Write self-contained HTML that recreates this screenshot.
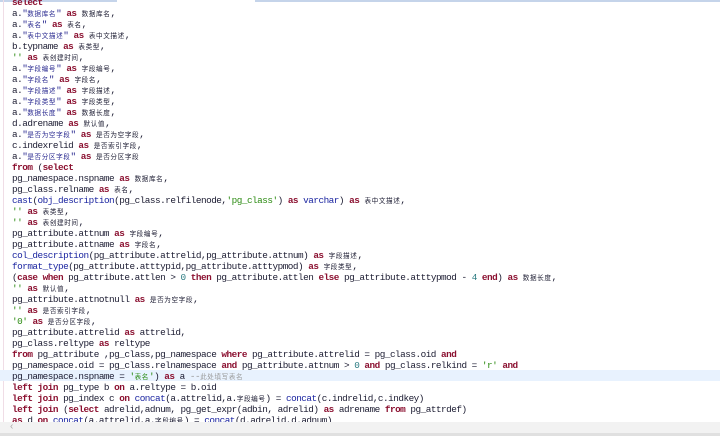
<!DOCTYPE html>
<html><head><meta charset="utf-8"><style>
html,body{margin:0;padding:0;width:720px;height:436px;overflow:hidden;background:#fff}
.top{position:absolute;top:0;height:2px;background:#c5d4ea}
.gut{position:absolute;left:3px;top:0;width:1px;height:422px;background:#f0dde6}
.hl{position:absolute;left:0;width:720px;top:370px;height:11px;background:#e8f2fe}
pre{position:absolute;left:12px;top:-3px;margin:0;font-family:"Liberation Mono",monospace;font-size:9.35px;line-height:11px;color:#1a1a30;letter-spacing:-0.5px}
.k{color:#8b1030;font-weight:bold}
.f{color:#1a24a0}
.s{color:#2a8a10}
.n{color:#2a7a80}
.c{color:#999}
i{font-style:normal;font-family:"Noto Sans CJK SC",sans-serif;font-size:6.6px;letter-spacing:0.6px}
.q{color:#2a2a90}
.sb{position:absolute;left:0;top:422px;width:720px;height:11px;background:#f2f2f2}
.sb2{position:absolute;left:0;top:433px;width:720px;height:3px;background:#e0e0e0}
.ar{position:absolute;left:10px;top:421px;font:10px "Liberation Sans",sans-serif;color:#aaa}
</style></head><body>
<div class="top" style="left:0;width:117px"></div>
<div class="top" style="left:255px;width:465px"></div>
<div class="gut"></div>
<div class="hl"></div>
<pre><span class="k">select</span>
a.<span class="q">"<i>数据库名</i>"</span> <span class="k">as</span> <i>数据库名</i>,
a.<span class="q">"<i>表名</i>"</span> <span class="k">as</span> <i>表名</i>,
a.<span class="q">"<i>表中文描述</i>"</span> <span class="k">as</span> <i>表中文描述</i>,
b.typname <span class="k">as</span> <i>表类型</i>,
<span class="s">''</span> <span class="k">as</span> <i>表创建时间</i>,
a.<span class="q">"<i>字段编号</i>"</span> <span class="k">as</span> <i>字段编号</i>,
a.<span class="q">"<i>字段名</i>"</span> <span class="k">as</span> <i>字段名</i>,
a.<span class="q">"<i>字段描述</i>"</span> <span class="k">as</span> <i>字段描述</i>,
a.<span class="q">"<i>字段类型</i>"</span> <span class="k">as</span> <i>字段类型</i>,
a.<span class="q">"<i>数据长度</i>"</span> <span class="k">as</span> <i>数据长度</i>,
d.adrename <span class="k">as</span> <i>默认值</i>,
a.<span class="q">"<i>是否为空字段</i>"</span> <span class="k">as</span> <i>是否为空字段</i>,
c.indexrelid <span class="k">as</span> <i>是否索引字段</i>,
a.<span class="q">"<i>是否分区字段</i>"</span> <span class="k">as</span> <i>是否分区字段</i>
<span class="k">from</span> (<span class="k">select</span>
pg_namespace.nspname <span class="k">as</span> <i>数据库名</i>,
pg_class.relname <span class="k">as</span> <i>表名</i>,
<span class="f">cast</span>(<span class="f">obj_description</span>(pg_class.relfilenode,<span class="s">'pg_class'</span>) <span class="k">as</span> <span class="f">varchar</span>) <span class="k">as</span> <i>表中文描述</i>,
<span class="s">''</span> <span class="k">as</span> <i>表类型</i>,
<span class="s">''</span> <span class="k">as</span> <i>表创建时间</i>,
pg_attribute.attnum <span class="k">as</span> <i>字段编号</i>,
pg_attribute.attname <span class="k">as</span> <i>字段名</i>,
<span class="f">col_description</span>(pg_attribute.attrelid,pg_attribute.attnum) <span class="k">as</span> <i>字段描述</i>,
<span class="f">format_type</span>(pg_attribute.atttypid,pg_attribute.atttypmod) <span class="k">as</span> <i>字段类型</i>,
(<span class="k">case when</span> pg_attribute.attlen &gt; <span class="n">0</span> <span class="k">then</span> pg_attribute.attlen <span class="k">else</span> pg_attribute.atttypmod - <span class="n">4</span> <span class="k">end</span>) <span class="k">as</span> <i>数据长度</i>,
<span class="s">''</span> <span class="k">as</span> <i>默认值</i>,
pg_attribute.attnotnull <span class="k">as</span> <i>是否为空字段</i>,
<span class="s">''</span> <span class="k">as</span> <i>是否索引字段</i>,
<span class="s">'0'</span> <span class="k">as</span> <i>是否分区字段</i>,
pg_attribute.attrelid <span class="k">as</span> attrelid,
pg_class.reltype <span class="k">as</span> reltype
<span class="k">from</span> pg_attribute ,pg_class,pg_namespace <span class="k">where</span> pg_attribute.attrelid = pg_class.oid <span class="k">and</span>
pg_namespace.oid = pg_class.relnamespace <span class="k">and</span> pg_attribute.attnum &gt; <span class="n">0</span> <span class="k">and</span> pg_class.relkind = <span class="s">'r'</span> <span class="k">and</span>
pg_namespace.nspname = <span class="s">'<i>表名</i>'</span>) <span class="k">as</span> a <span class="c">--<i>此处填写表名</i></span>
<span class="k">left join</span> pg_type b <span class="k">on</span> a.reltype = b.oid
<span class="k">left join</span> pg_index c <span class="k">on</span> <span class="f">concat</span>(a.attrelid,a.<i>字段编号</i>) = <span class="f">concat</span>(c.indrelid,c.indkey)
<span class="k">left join</span> (<span class="k">select</span> adrelid,adnum, pg_get_expr(adbin, adrelid) <span class="k">as</span> adrename <span class="k">from</span> pg_attrdef)
<span class="k">as</span> d <span class="k">on</span> <span class="f">concat</span>(a.attrelid,a.<i>字段编号</i>) = <span class="f">concat</span>(d.adrelid,d.adnum)
</pre>
<div class="sb"></div><div class="sb2"></div><div class="ar">&lsaquo;</div>
</body></html>
